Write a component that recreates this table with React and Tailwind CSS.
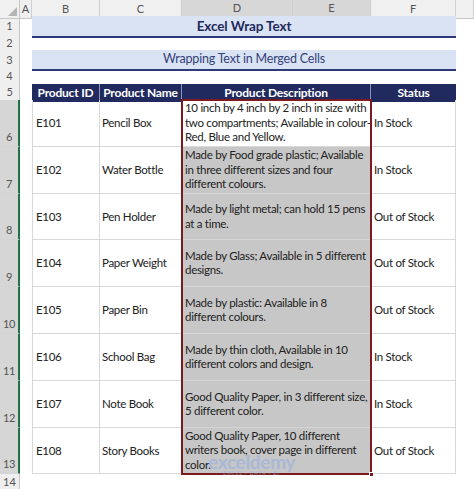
import React from "react";

const GRID = "grid grid-cols-[20px_12px_68px_82px_111px_78px_85px_1fr]";
const FONT = { fontFamily: "Lato, 'Open Sans', sans-serif" };

const rows = [
  { n: 6, h: "h-[47px]", id: "E101", name: "Pencil Box", desc: ["10 inch by 4 inch by 2 inch in size with", "two compartments; Available in colour-", "Red, Blue and Yellow."], status: "In Stock", active: true },
  { n: 7, h: "h-[47px]", id: "E102", name: "Water Bottle", desc: ["Made by Food grade plastic; Available", "in three different sizes and four", "different colours."], status: "In Stock" },
  { n: 8, h: "h-[46px]", id: "E103", name: "Pen Holder", desc: ["Made by light metal; can hold 15 pens", "at a time."], status: "Out of Stock" },
  { n: 9, h: "h-[47px]", id: "E104", name: "Paper Weight", desc: ["Made by Glass; Available in 5 different", "designs."], status: "Out of Stock" },
  { n: 10, h: "h-[47px]", id: "E105", name: "Paper Bin", desc: ["Made by plastic: Available in 8", "different colours."], status: "Out of Stock" },
  { n: 11, h: "h-[47px]", id: "E106", name: "School Bag", desc: ["Made by thin cloth, Available in 10", "different colors and design."], status: "In Stock" },
  { n: 12, h: "h-[47px]", id: "E107", name: "Note Book", desc: ["Good Quality Paper, in 3 different size,", "5 different color."], status: "In Stock" },
  { n: 13, h: "h-[46px]", id: "E108", name: "Story Books", desc: ["Good Quality Paper, 10 different", "writers book, cover page in different", "color."], status: "Out of Stock" },
];

function RowHead({ n, sel, bottom }) {
  return (
    <div
      className={`flex justify-center border-b border-[#d4d4d4] text-[11px] text-[#555] ${
        sel ? "bg-[#d6d6d6] border-r-2 border-r-[#217346]" : "bg-[#efefef] border-r border-r-[#c6c6c6]"
      } ${bottom ? "items-end pb-[1px]" : "items-center"}`}
    >
      {n}
    </div>
  );
}

function ColHead({ children, sel }) {
  return (
    <div
      className={`flex items-center justify-center border-r border-[#cfcfcf] text-[11px] text-[#555] ${
        sel ? "bg-[#d7d7d7] border-b-2 border-b-[#217346]" : "bg-[#f0f0f0] border-b border-b-[#c6c6c6]"
      }`}
    >
      {children}
    </div>
  );
}

export default function App() {
  return (
    <div className="relative w-[474px] h-[489px] overflow-hidden bg-white text-[#222]" style={FONT}>
      {/* column header */}
      <div className={`${GRID} h-[16px]`}>
        <div className="relative bg-[#f0f0f0] border-r border-b border-[#c6c6c6]">
          <svg className="absolute right-[2px] bottom-[2px]" width="9" height="9" viewBox="0 0 9 9">
            <polygon points="9,0 9,9 0,9" fill="#b4b4b4" />
          </svg>
        </div>
        <ColHead>A</ColHead>
        <ColHead>B</ColHead>
        <ColHead>C</ColHead>
        <ColHead sel>D</ColHead>
        <ColHead sel>E</ColHead>
        <ColHead>F</ColHead>
        <ColHead></ColHead>
      </div>

      {/* row 1 */}
      <div className={`${GRID} h-[19px]`}>
        <RowHead n={1} />
        <div />
        <div className="col-span-5 flex items-center justify-center bg-[#dae3f3] border-b-2 border-[#2e3a78] text-[13.5px] tracking-[-0.1px] font-bold text-[#1f2a5c]">
          Excel Wrap Text
        </div>
        <div />
      </div>
      {/* row 2 */}
      <div className={`${GRID} h-[15px]`}>
        <RowHead n={2} />
        <div className="col-span-7" />
      </div>
      {/* row 3 */}
      <div className={`${GRID} h-[18px]`}>
        <RowHead n={3} />
        <div />
        <div className="col-span-5 flex items-center justify-center bg-[#dae3f3] border-b-2 border-[#2e3a78] text-[12.5px] tracking-[-0.2px] text-[#34427a]">
          Wrapping Text in Merged Cells
        </div>
        <div />
      </div>
      {/* row 4 */}
      <div className={`${GRID} h-[16px]`}>
        <RowHead n={4} />
        <div className="col-span-7" />
      </div>
      {/* row 5 header */}
      <div className={`${GRID} h-[16px] tracking-[-0.2px]`}>
        <RowHead n={5} />
        <div />
        <div className="flex items-center justify-center bg-[#212a5e] border-r border-[#8d93b3] text-[12px] font-bold text-white">Product ID</div>
        <div className="flex items-center justify-center bg-[#212a5e] border-r border-[#8d93b3] text-[12px] font-bold text-white">Product Name</div>
        <div className="col-span-2 flex items-center justify-center bg-[#212a5e] border-r border-[#8d93b3] text-[12px] font-bold text-white">Product Description</div>
        <div className="flex items-center justify-center bg-[#212a5e] text-[12px] font-bold text-white">Status</div>
        <div />
      </div>

      {rows.map((r) => (
        <div key={r.n} className={`${GRID} ${r.h} text-[11.5px] tracking-[-0.3px]`}>
          <RowHead n={r.n} sel bottom />
          <div />
          <div className="flex items-center pl-[3px] border-l border-r border-b border-[#d9d9d9]">{r.id}</div>
          <div className="flex items-center pl-[2px] border-r border-b border-[#d9d9d9]">{r.name}</div>
          <div
            className={`col-span-2 flex flex-col justify-center pl-[3px] border-r border-b leading-[14.5px] ${
              r.active ? "bg-white border-[#d9d9d9]" : "bg-[#c7c7c7] border-[#d6d6d6]"
            }`}
          >
            {r.desc.map((l, i) => (
              <div key={i} className="whitespace-nowrap">{l}</div>
            ))}
          </div>
          <div className="flex items-center pl-[3px] border-r border-b border-[#d9d9d9]">{r.status}</div>
          <div />
        </div>
      ))}

      {/* row 14 */}
      <div className={`${GRID} h-[15px]`}>
        <RowHead n={14} />
        <div className="col-span-7" />
      </div>

      {/* selection border */}
      <div className="absolute left-[181px] top-[99px] w-[191px] h-[376px] border-2 border-[#7c1a1f] pointer-events-none" />
      <div className="absolute left-[369px] top-[472px] w-[5px] h-[5px] bg-[#7c1a1f] border border-white" />

      {/* watermark */}
      <div className="absolute left-[208px] top-[452px] flex flex-col items-center leading-none pointer-events-none">
        <span className="text-[19px] font-bold text-[#9db2dc] opacity-70 tracking-[-0.3px]">exceldemy</span>
        <span className="text-[5px] tracking-[1px] text-[#9db2dc] opacity-70">EXCEL · DATA · BI</span>
      </div>
    </div>
  );
}
